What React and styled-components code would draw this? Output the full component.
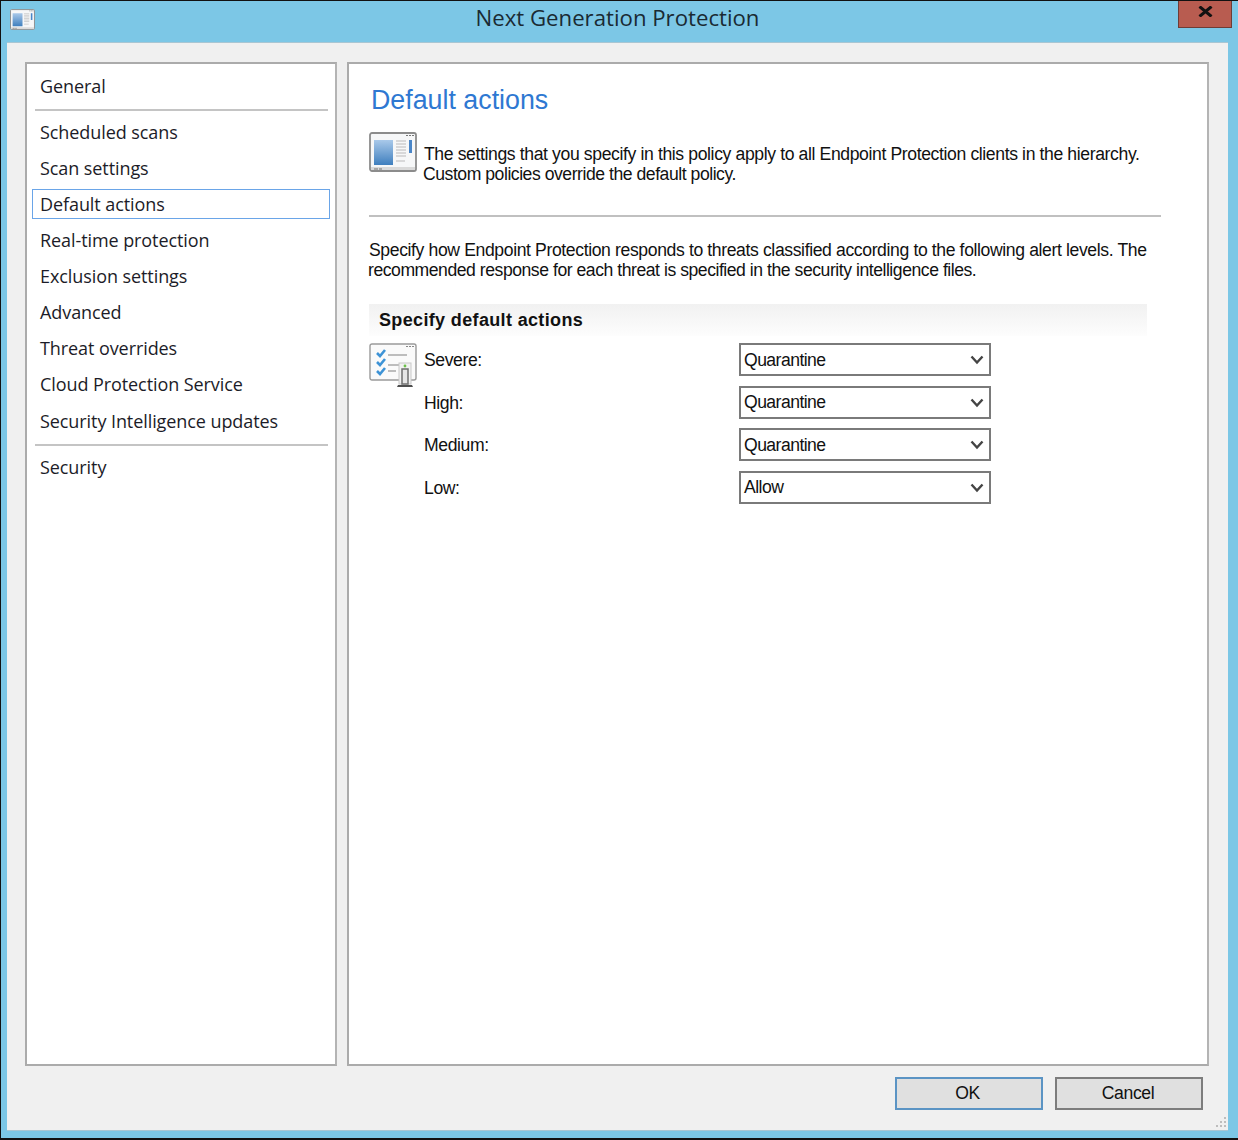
import React from "react";
import styled, { createGlobalStyle } from "styled-components";

const GlobalStyle = createGlobalStyle`
  html, body {
    margin: 0;
    padding: 0;
    background: #7cc7e6;
  }
`;

const Frame = styled.div`
  position: relative;
  box-sizing: border-box;
  width: 1238px;
  height: 1140px;
  background: #7cc7e6;
  border-top: 1px solid #111;
  border-left: 1px solid #111;
  border-bottom: 2px solid #111;
  display: flex;
  flex-direction: column;
  padding: 0 10px 7px 6px;
  font-family: "Liberation Sans", Arial, sans-serif;
  color: #111;
`;

const TitleBar = styled.div`
  height: 41px;
  flex: none;
  display: flex;
  align-items: center;
  justify-content: center;
  padding: 0 0 9px 0;
  box-sizing: border-box;
  font-family: "Open Sans", sans-serif;
  font-size: 22.2px;
  color: #1a2a33;
`;

const WindowIcon = styled.div`
  position: absolute;
  left: 9px;
  top: 8px;
  line-height: 0;
`;

const CloseButton = styled.div`
  position: absolute;
  right: 6px;
  top: 0;
  width: 54px;
  height: 27px;
  box-sizing: border-box;
  background: #b85c50;
  border: 1px solid #6e3c36;
  border-top: none;
  display: flex;
  align-items: center;
  justify-content: center;
  padding-bottom: 5px;
`;

const Client = styled.div`
  flex: 1;
  box-sizing: border-box;
  background: #f0f0f0;
  border-top: 1px solid #a9c6d3;
  border-bottom: 1px solid #a9c6d3;
  padding: 19px 19px 0 18px;
  display: flex;
  flex-direction: column;
  position: relative;
`;

const Panels = styled.div`
  display: flex;
  gap: 10px;
  height: 1004px;
`;

const Panel = styled.div`
  box-sizing: border-box;
  background: #fff;
  border: 2px solid #ababab;
  border-right-color: #b4b4b4;
`;

const NavPanel = styled(Panel)`
  width: 312px;
  padding: 5px 5px 0 5px;
  display: flex;
  flex-direction: column;
`;

const NavItem = styled.div`
  box-sizing: border-box;
  height: ${(p) => (p.$active ? "30px" : "36.2px")};
  margin: ${(p) => (p.$active ? "1.5px 0 3.5px" : "0")};
  line-height: ${(p) => (p.$active ? "28px" : "34px")};
  padding-left: ${(p) => (p.$active ? "7px" : "8px")};
  border: ${(p) => (p.$active ? "1.5px solid #6aa5e8" : "none")};
  font-family: "Open Sans", sans-serif;
  font-size: 18px;
  letter-spacing: -0.08px;
  color: #1c1c28;
  white-space: nowrap;
`;

const NavRule = styled.div`
  height: 2px;
  flex: none;
  margin: ${(p) => p.$margin};
  background: #c4c4c4;
`;

const ContentPanel = styled(Panel)`
  flex: 1;
  padding: 19px 46px 0 20px;
`;

const Heading = styled.h1`
  margin: 0 0 0 2px;
  font-weight: 400;
  font-size: 26.8px;
  line-height: 34px;
  color: #2e78d2;
`;

const IntroRow = styled.div`
  display: flex;
  gap: 7px;
  margin-top: 15px;
  height: 83px;
  border-bottom: 2px solid #c0c0c0;
`;

const BodyText = styled.p`
  margin: ${(p) => p.$margin || 0};
  font-size: 17.6px;
  line-height: 20.2px;
  letter-spacing: ${(p) => p.$tracking || "-0.38px"};
  color: #111;
  white-space: nowrap;
`;

const SectionHeader = styled.div`
  width: 778px;
  height: 32px;
  margin-top: 24px;
  box-sizing: border-box;
  padding-left: 10px;
  line-height: 32px;
  font-size: 18px;
  font-weight: 700;
  letter-spacing: 0.35px;
  color: #111;
  background: linear-gradient(#f1f1f1, #fdfdfd);
`;

const ActionsArea = styled.div`
  display: flex;
  margin-top: 7px;
`;

const IconColumn = styled.div`
  width: 55px;
  flex: none;
`;

const ActionRows = styled.div`
  display: grid;
  grid-template-columns: 315px 252px;
  row-gap: 9.5px;
  align-items: center;
`;

const RowLabel = styled.div`
  padding-top: 2px;
  font-size: 17.6px;
  letter-spacing: -0.4px;
  color: #111;
`;

const Select = styled.div`
  box-sizing: border-box;
  height: 33px;
  border: 2px solid #7a7a7a;
  background: #fff;
  display: flex;
  align-items: center;
  justify-content: space-between;
  padding: 1px 5px 0 3px;
  font-size: 17.6px;
  letter-spacing: -0.55px;
  color: #111;
`;

const Footer = styled.div`
  display: flex;
  justify-content: flex-end;
  gap: 12.5px;
  margin-top: 11px;
  padding-right: 6px;
`;

const Button = styled.button`
  box-sizing: border-box;
  width: 148px;
  height: 33px;
  padding: 0 2px 0 0;
  background: #e0e0e0;
  border: 2px solid ${(p) => (p.$primary ? "#5b94c4" : "#7d7d7d")};
  font-family: "Liberation Sans", Arial, sans-serif;
  font-size: 17.6px;
  letter-spacing: -0.4px;
  color: #111;
`;

const Grip = styled.div`
  position: absolute;
  right: 1px;
  bottom: 1px;
  line-height: 0;
`;

const Chevron = () => (
  <svg width="14" height="10" viewBox="0 0 14 10">
    <path d="M1.5 1.5 7 7.5l5.5-6" fill="none" stroke="#444" strokeWidth="2.4" />
  </svg>
);

const PolicyIcon = ({ id, width, height }) => (
  <svg width={width} height={height} viewBox="0 0 48 42">
    <defs>
      <linearGradient id={id} x1="0" y1="0" x2="0" y2="1">
        <stop offset="0" stopColor="#a9c9ea" />
        <stop offset="1" stopColor="#3f7fbe" />
      </linearGradient>
    </defs>
    <rect x="1" y="1" width="46" height="38" rx="2" fill="#f6f7f8" stroke="#8c8c8c" strokeWidth="1.8" />
    <path d="M2 35h44v3H2z" fill="#d9d9d9" />
    <rect x="5" y="8" width="19" height="25" fill={`url(#${id})`} />
    <path d="M27 9h10M27 12h10M27 15h10M27 18h10M27 21h10M27 24h10M27 29h9" stroke="#b9b9b9" strokeWidth="1.2" />
    <rect x="40" y="8" width="3" height="13" fill="#4a86c8" />
    <path d="M37 3.5h2M40 3.5h2M43 3.5h2M5 37h4M10 37h3" stroke="#777" strokeWidth="1.2" />
  </svg>
);

const ChecklistIcon = () => (
  <svg width="48" height="46" viewBox="0 0 48 46">
    <rect x="1" y="1" width="46" height="36" rx="2" fill="#fafafa" stroke="#9a9a9a" strokeWidth="1.4" />
    <path d="M37 3.500h2M40 3.500h2M43 3.500h2" stroke="#888" strokeWidth="1.200" />
    <path d="M8 10l3 3 5-6M8 19l3 3 5-6M8 28l3 3 5-6" fill="none" stroke="#3d93d6" strokeWidth="2.600" />
    <path d="M19 12h19M19 22h11M19 28h8" stroke="#a9a9a9" strokeWidth="1.400" />
    <rect x="30" y="20" width="12" height="21" fill="#f2f2f2" stroke="#c8c8c8" />
    <rect x="33" y="26" width="6" height="15" fill="#e6e6e6" stroke="#6f6f6f" strokeWidth="1.500" />
    <circle cx="36" cy="23" r="1.400" fill="#6cc24a" />
    <path d="M29 42h14l1 2H28z" fill="#4f4f4f" />
  </svg>
);

const navGroups = [
  ["General"],
  [
    "Scheduled scans",
    "Scan settings",
    "Default actions",
    "Real-time protection",
    "Exclusion settings",
    "Advanced",
    "Threat overrides",
    "Cloud Protection Service",
    "Security Intelligence updates",
  ],
  ["Security"],
];

const levels = [
  ["Severe:", "Quarantine"],
  ["High:", "Quarantine"],
  ["Medium:", "Quarantine"],
  ["Low:", "Allow"],
];

export default function App() {
  return (
    <>
      <GlobalStyle />
      <Frame>
        <WindowIcon>
          <PolicyIcon id="smallBlue" width={25} height={22} />
        </WindowIcon>
        <TitleBar>Next Generation Protection</TitleBar>
        <CloseButton>
          <svg width="15" height="11" viewBox="0 0 15 11">
            <path d="M1.5 0.5 13.500 10.500M13.500 0.500 1.500 10.500" stroke="#111" strokeWidth="3" />
          </svg>
        </CloseButton>
        <Client>
          <Panels>
            <NavPanel>
              {navGroups.map((group, i) => (
                <React.Fragment key={i}>
                  {i > 0 && <NavRule $margin={i === 1 ? "4px 2px 4px 3px" : "4px 2px 4px 3px"} />}
                  {group.map((item) => (
                    <NavItem key={item} $active={item === "Default actions"}>
                      {item}
                    </NavItem>
                  ))}
                </React.Fragment>
              ))}
            </NavPanel>
            <ContentPanel>
              <Heading>Default actions</Heading>
              <IntroRow>
                <PolicyIcon id="largeBlue" width={48} height={42} />
                <div>
                  <BodyText $margin="12px 0 0 0">
                    The settings that you specify in this policy apply to all Endpoint Protection clients in the hierarchy.
                  </BodyText>
                  <BodyText $tracking="-0.46px" $margin="0 0 0 -1px">
                    Custom policies override the default policy.
                  </BodyText>
                </div>
              </IntroRow>
              <BodyText $margin="23px 0 0 0">
                Specify how Endpoint Protection responds to threats classified according to the following alert levels. The
              </BodyText>
              <BodyText $tracking="-0.46px" $margin="0 0 0 -1px">
                recommended response for each threat is specified in the security intelligence files.
              </BodyText>
              <SectionHeader>Specify default actions</SectionHeader>
              <ActionsArea>
                <IconColumn>
                  <ChecklistIcon />
                </IconColumn>
                <ActionRows>
                  {levels.map(([label, value]) => (
                    <React.Fragment key={label}>
                      <RowLabel>{label}</RowLabel>
                      <Select>
                        {value}
                        <Chevron />
                      </Select>
                    </React.Fragment>
                  ))}
                </ActionRows>
              </ActionsArea>
            </ContentPanel>
          </Panels>
          <Footer>
            <Button $primary>OK</Button>
            <Button>Cancel</Button>
          </Footer>
          <Grip>
            <svg width="14" height="14" viewBox="0 0 14 14">
              <path d="M11 2h2v2h-2zM7 6h2v2H7zM11 6h2v2h-2zM3 10h2v2H3zM7 10h2v2H7zM11 10h2v2h-2z" fill="#bdbdbd" />
            </svg>
          </Grip>
        </Client>
      </Frame>
    </>
  );
}
